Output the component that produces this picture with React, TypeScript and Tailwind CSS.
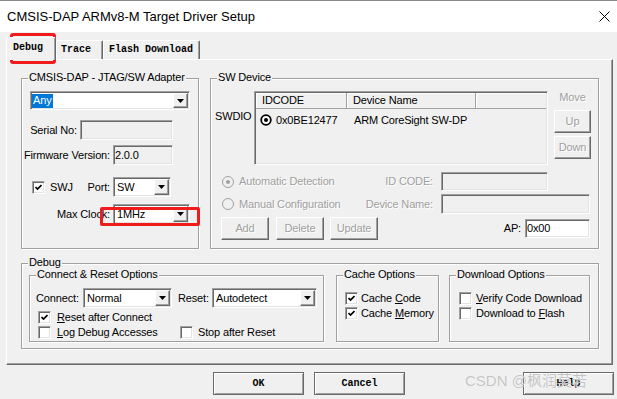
import React from 'react';

const sunken =
  'border border-t-[#a0a0a0] border-l-[#a0a0a0] border-b-white border-r-white p-[1px] shadow-[inset_1px_1px_0_#696969,inset_-1px_-1px_0_#e3e3e3]';
const raised =
  'border border-t-white border-l-white border-b-[#696969] border-r-[#696969] shadow-[inset_-1px_-1px_0_#a0a0a0]';
const grayText = 'text-[#a0a0a0] [text-shadow:1px_1px_0_#fff]';

type Kids = { className?: string; children?: React.ReactNode };

function Group({ title, className = '', children }: Kids & { title: string }) {
  return (
    <div className={`relative shrink-0 border border-[#a0a0a0] shadow-[inset_1px_1px_0_#fff,1px_1px_0_#fff] ${className}`}>
      <span className="absolute left-[6px] top-[-8px] bg-[#f0f0f0] px-[1px] whitespace-nowrap">{title}</span>
      {children}
    </div>
  );
}

function Combo({ className = '', children }: Kids) {
  return (
    <div className={`${sunken} bg-white flex shrink-0 ${className}`}>
      <div className="flex-1 flex items-center overflow-hidden whitespace-nowrap">{children}</div>
      <div className={`${raised} w-[15px] bg-[#f0f0f0] flex items-center justify-center`}>
        <svg width="7" height="4" viewBox="0 0 7 4">
          <path d="M0 0H7L3.5 4Z" fill="#000" />
        </svg>
      </div>
    </div>
  );
}

function Field({ className = '', children }: Kids) {
  return <div className={`${sunken} flex items-center shrink-0 whitespace-nowrap ${className}`}>{children}</div>;
}

function Btn({ className = '', children, disabled }: Kids & { disabled?: boolean }) {
  return (
    <div className={`${raised} bg-[#f0f0f0] flex items-center justify-center shrink-0 ${disabled ? grayText : ''} ${className}`}>
      {children}
    </div>
  );
}

function Check({ checked = false }: { checked?: boolean }) {
  return (
    <span className={`${sunken} w-[13px] h-[13px] bg-white flex items-center justify-center shrink-0`}>
      {checked && (
        <svg width="7" height="7" viewBox="0 0 7 7">
          <path d="M0.5 3L2.5 5L6.5 1" stroke="#000" strokeWidth="1.7" fill="none" />
        </svg>
      )}
    </span>
  );
}

function Radio({ checked = false }: { checked?: boolean }) {
  return (
    <svg width="12" height="12" viewBox="0 0 12 12" className="shrink-0">
      <circle cx="6" cy="6" r="5.5" fill="#f0f0f0" stroke="#a0a0a0" />
      {checked && <circle cx="6" cy="6" r="2" fill="#a0a0a0" />}
    </svg>
  );
}

export default function App() {
  return (
    <div className="relative w-[617px] h-[399px] overflow-hidden bg-[#f0f0f0] text-black font-['Liberation_Sans',Arial,sans-serif] text-[11px] leading-[13px] tracking-[-0.15px]">
      {/* title bar */}
      <div className="h-[32px] bg-white border-t border-[#8a8a8a] flex items-center justify-between pl-[7px] pr-[7px]">
        <span className="text-[13px] tracking-normal">CMSIS-DAP ARMv8-M Target Driver Setup</span>
        <svg width="11" height="11" viewBox="0 0 11 11">
          <path d="M0.5 0.5L10.5 10.5M10.5 0.5L0.5 10.5" stroke="#000" strokeWidth="1" />
        </svg>
      </div>

      {/* tabs */}
      <div className="flex items-end h-[27px] pl-[6px] font-['Liberation_Mono',monospace] text-[10px] font-bold tracking-normal">
        <div className="relative z-10 -mb-[1px] w-[50px] h-[23px] bg-[#f0f0f0] border-t border-l border-white border-r border-r-[#696969] shadow-[inset_-1px_0_0_#a0a0a0] rounded-t-[2px] pl-[6px] pt-[3px]">
          Debug
        </div>
        <div className="w-[47px] h-[19px] border-t border-l border-white border-r border-r-[#696969] shadow-[inset_-1px_0_0_#a0a0a0] rounded-t-[2px] pl-[4px] pt-[2px]">
          Trace
        </div>
        <div className="w-[97px] h-[19px] border-t border-l border-white border-r border-r-[#696969] shadow-[inset_-1px_0_0_#a0a0a0] rounded-t-[2px] pl-[5px] pt-[2px]">
          Flash Download
        </div>
      </div>

      {/* tab panel */}
      <div className="ml-[6px] w-[607px] h-[306px] border border-t-white border-l-white border-b-[#696969] border-r-[#696969] shadow-[inset_-1px_-1px_0_#a0a0a0] pl-[14px] pt-[18px]">
        <div className="flex">
          <Group title="CMSIS-DAP - JTAG/SW Adapter" className="w-[178px] h-[171px]">
            <Combo className="ml-[8px] mt-[12px] w-[160px] h-[19px]">
              <span className="bg-[#0078d7] text-white pl-[1px] pr-[1px] h-[14px] flex items-center">Any</span>
            </Combo>
            <div className="flex items-center mt-[10px]">
              <span className="w-[55px] text-right">Serial No:</span>
              <Field className="ml-[3px] w-[93px] h-[20px] bg-[#f0f0f0]" />
            </div>
            <div className="flex items-center mt-[5px]">
              <span className="w-[88px] text-right whitespace-nowrap">Firmware Version:</span>
              <Field className="ml-[3px] w-[60px] h-[20px] bg-[#f0f0f0]">2.0.0</Field>
            </div>
            <div className="flex items-center mt-[12px]">
              <div className="w-[88px] flex items-center pl-[10px]">
                <Check checked />
                <span className="ml-[5px]">SWJ</span>
                <span className="ml-auto">Port:</span>
              </div>
              <Combo className="ml-[3px] w-[58px] h-[20px]">
                <span className="pl-[2px]">SW</span>
              </Combo>
            </div>
            <div className="flex items-center mt-[7px]">
              <span className="w-[88px] text-right">Max Clock:</span>
              <Combo className="ml-[3px] w-[77px] h-[20px]">
                <span className="pl-[2px]">1MHz</span>
              </Combo>
            </div>
          </Group>

          <Group title="SW Device" className="ml-[11px] w-[389px] h-[171px]">
            <div className="flex items-start mt-[12px]">
              <span className="w-[43px] pl-[4px] mt-[19px]">SWDIO</span>
              <div className={`${sunken} w-[294px] h-[74px] bg-[#f0f0f0] shrink-0`}>
                <div className="flex h-[16px]">
                  <div className="w-[91px] border-r border-b border-[#a0a0a0] shadow-[inset_1px_1px_0_#fff] pl-[6px] flex items-center">IDCODE</div>
                  <div className="w-[129px] border-r border-b border-[#a0a0a0] shadow-[inset_1px_1px_0_#fff] pl-[6px] flex items-center">Device Name</div>
                  <div className="flex-1 border-b border-[#a0a0a0] shadow-[inset_1px_1px_0_#fff]" />
                </div>
                <div className="flex items-center h-[16px] mt-[3px]">
                  <div className="w-[91px] pl-[4px] flex items-center">
                    <svg width="12" height="12" viewBox="0 0 12 12" className="shrink-0">
                      <circle cx="6" cy="6" r="4.8" fill="#fff" stroke="#000" strokeWidth="1.8" />
                      <circle cx="6" cy="6" r="2" fill="#000" />
                    </svg>
                    <span className="ml-[4px]">0x0BE12477</span>
                  </div>
                  <span className="pl-[7px]">ARM CoreSight SW-DP</span>
                </div>
              </div>
              <div className="ml-[6px] w-[37px] flex flex-col">
                <span className={`text-center ${grayText}`}>Move</span>
                <Btn disabled className="mt-[6px] h-[23px]">Up</Btn>
                <Btn disabled className="mt-[3px] h-[23px]">Down</Btn>
              </div>
            </div>

            <div className="flex items-center mt-[7px] h-[19px]">
              <div className={`w-[222px] flex items-center pl-[11px] ${grayText}`}>
                <Radio checked />
                <span className="ml-[5px]">Automatic Detection</span>
                <span className="ml-auto">ID CODE:</span>
              </div>
              <Field className="ml-[8px] w-[107px] h-[19px] bg-[#f0f0f0]" />
            </div>
            <div className="flex items-center mt-[3px] h-[20px]">
              <div className={`w-[222px] flex items-center pl-[11px] ${grayText}`}>
                <Radio />
                <span className="ml-[5px]">Manual Configuration</span>
                <span className="ml-auto">Device Name:</span>
              </div>
              <Field className="ml-[8px] w-[149px] h-[20px] bg-[#f0f0f0]" />
            </div>
            <div className="flex items-center mt-[3px] h-[23px] pr-[8px]">
              <Btn disabled className="ml-[10px] w-[48px] h-[23px]">Add</Btn>
              <Btn disabled className="ml-[7px] w-[48px] h-[23px]">Delete</Btn>
              <Btn disabled className="ml-[6px] w-[48px] h-[23px]">Update</Btn>
              <span className="ml-auto">AP:</span>
              <Field className="ml-[4px] w-[65px] h-[19px] bg-white">0x00</Field>
            </div>
          </Group>
        </div>

        <Group title="Debug" className="mt-[14px] w-[578px] h-[86px]">
          <div className="flex mt-[11px]">
            <Group title="Connect & Reset Options" className="ml-[7px] w-[295px] h-[67px]">
              <div className="flex items-center mt-[12px] pl-[6px]">
                <span className="w-[47px]">Connect:</span>
                <Combo className="w-[89px] h-[20px]">
                  <span className="pl-[2px]">Normal</span>
                </Combo>
                <span className="ml-[6px] w-[34px]">Reset:</span>
                <Combo className="w-[105px] h-[20px]">
                  <span className="pl-[2px]">Autodetect</span>
                </Combo>
              </div>
              <div className="flex items-center mt-[2px] h-[15px] pl-[8px]">
                <Check checked />
                <span className="ml-[6px]">
                  <u>R</u>eset after Connect
                </span>
              </div>
              <div className="flex items-center h-[15px] pl-[8px]">
                <div className="w-[142px] flex items-center">
                  <Check />
                  <span className="ml-[6px]">
                    <u>L</u>og Debug Accesses
                  </span>
                </div>
                <Check />
                <span className="ml-[5px]">Stop after Reset</span>
              </div>
            </Group>

            <Group title="Cache Options" className="ml-[12px] w-[103px] h-[67px]">
              <div className="flex items-center mt-[15px] h-[15px] pl-[8px]">
                <Check checked />
                <span className="ml-[3px]">
                  Cache <u>C</u>ode
                </span>
              </div>
              <div className="flex items-center h-[15px] pl-[8px]">
                <Check checked />
                <span className="ml-[3px]">
                  Cache <u>M</u>emory
                </span>
              </div>
            </Group>

            <Group title="Download Options" className="ml-[10px] w-[141px] h-[67px]">
              <div className="flex items-center mt-[15px] h-[15px] pl-[9px]">
                <Check />
                <span className="ml-[4px]">
                  <u>V</u>erify Code Download
                </span>
              </div>
              <div className="flex items-center h-[15px] pl-[9px]">
                <Check />
                <span className="ml-[4px]">
                  Download to <u>F</u>lash
                </span>
              </div>
            </Group>
          </div>
        </Group>
      </div>

      {/* dialog buttons */}
      <div className="flex mt-[7px] font-['Liberation_Mono',monospace] text-[10px] font-bold tracking-normal">
        <div className="ml-[213px] w-[91px] h-[23px] border border-[#696969] shadow-[inset_1px_1px_0_#fff,inset_-1px_-1px_0_#a0a0a0] flex items-center justify-center">
          OK
        </div>
        <div className="ml-[10px] w-[91px] h-[23px] border border-[#696969] shadow-[inset_1px_1px_0_#fff,inset_-1px_-1px_0_#a0a0a0] flex items-center justify-center">
          Cancel
        </div>
        <div className="ml-[118px] w-[91px] h-[23px] border border-[#696969] shadow-[inset_1px_1px_0_#fff,inset_-1px_-1px_0_#a0a0a0] flex items-center justify-center">
          Help
        </div>
      </div>

      {/* red highlight marks */}
      <div className="absolute left-[10px] top-[33px] w-[46px] h-[31px] border-[3px] border-[#f01c1c] rounded-[3px]" />
      <div className="absolute left-[100px] top-[207px] w-[100px] h-[19px] border-[3px] border-[#f01c1c] rounded-[2px]" />

      {/* watermark */}
      <span className="absolute left-[465px] top-[372px] text-[15px] leading-[18px] tracking-normal text-[#bdbdbd]/90 [text-shadow:0_0_1px_#fff] font-['Liberation_Sans','Noto_Sans_CJK_SC',sans-serif]">
        CSDN @枫润莫若
      </span>
    </div>
  );
}
